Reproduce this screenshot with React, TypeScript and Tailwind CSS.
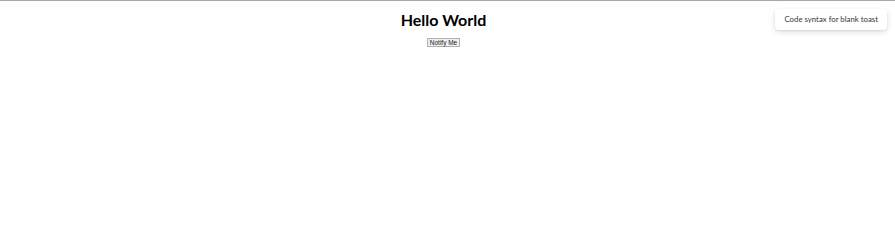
import React from "react";

export default function App() {
  return (
    <div className="relative h-[212px] w-full border-t border-[#a6a6a6] bg-white">
      <div className="flex flex-col items-center pr-[8px] pt-[9px]">
        <h1 className="font-['Lato',sans-serif] text-[16px] font-bold leading-[20px] text-black">
          Hello World
        </h1>
        <button className="mt-[8px] border border-[#b0b0b0] bg-[#efefef] px-[2px] font-['Liberation_Sans',sans-serif] text-[6.5px] leading-[7px] text-[#222]">
          Notify Me
        </button>
      </div>
      <div className="absolute right-[8px] top-[8px] rounded-[4px] bg-white px-[9px] py-[5px] font-['Lato',sans-serif] text-[7.8px] leading-[11px] text-[#363636] shadow-[0_2px_6px_rgba(0,0,0,0.12),0_1px_2px_rgba(0,0,0,0.08)]">
        Code syntax for blank toast
      </div>
    </div>
  );
}
